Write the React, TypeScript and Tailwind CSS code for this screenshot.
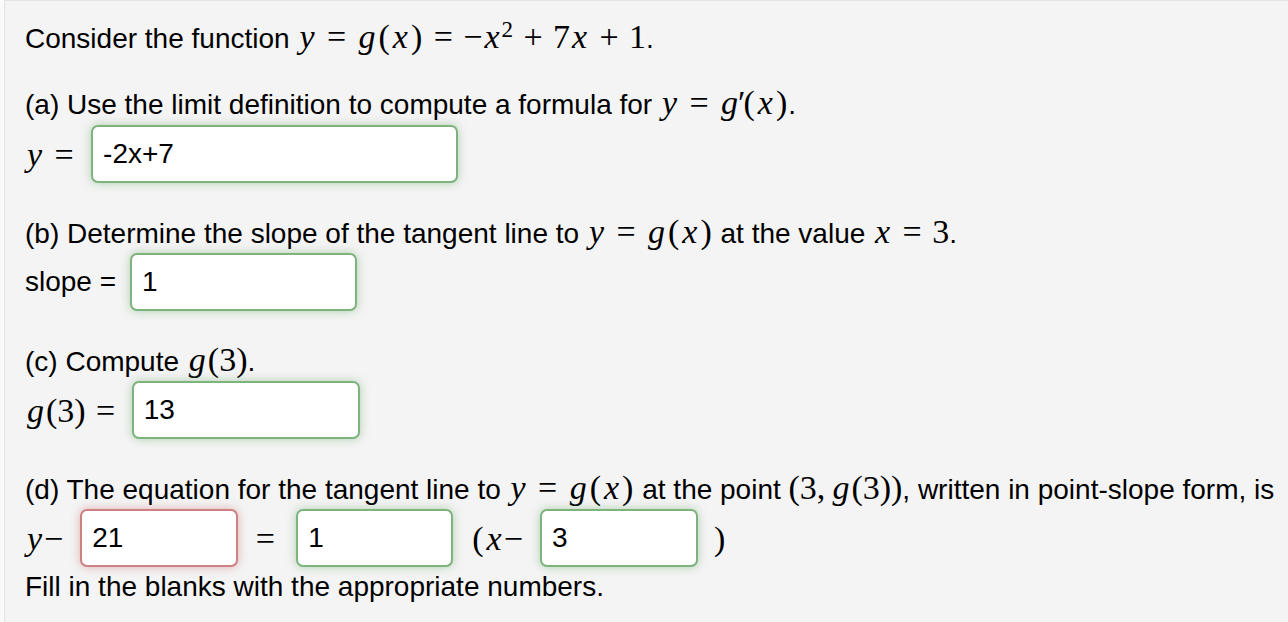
import type { ReactNode } from "react";

// ---------------------------------------------------------------------------
// Math helpers (serif, TeX-like)
// ---------------------------------------------------------------------------

function Mi({ children }: { children: ReactNode }) {
  return (
    <span className="px-[2px] font-['Liberation_Serif',serif] text-[34px] italic">{children}</span>
  );
}

function Mn({ children }: { children: ReactNode }) {
  return <span className="font-['Liberation_Serif',serif] text-[34px]">{children}</span>;
}

function P({ children }: { children: ReactNode }) {
  return <span className="px-[1px] font-['Liberation_Serif',serif] text-[34px]">{children}</span>;
}

function Rel({ children = "=" }: { children?: ReactNode }) {
  return (
    <span className="inline-block w-[40px] text-center font-['Liberation_Serif',serif] text-[34px]">
      {children}
    </span>
  );
}

function Bin({ children }: { children: ReactNode }) {
  return (
    <span className="inline-block w-[40px] text-center font-['Liberation_Serif',serif] text-[34px]">
      {children}
    </span>
  );
}

type Tone = "ok" | "bad";

function Blank({ value, width, tone = "ok" }: { value: string; width: string; tone?: Tone }) {
  const toneCls =
    tone === "ok"
      ? "border-[#7db37d] shadow-[0_0_10px_rgba(110,170,110,0.5)]"
      : "border-[#cf8080] shadow-[0_0_10px_rgba(200,110,110,0.5)]";
  return (
    <div
      className={`flex h-[58px] shrink-0 items-center rounded-[7px] border-2 bg-white pl-[10px] text-[28px] ${toneCls} ${width}`}
    >
      {value}
    </div>
  );
}

export default function App() {
  return (
    <div className="h-[622px] w-[1288px] bg-[#fafafa] pl-[4px] font-['Liberation_Sans',Arial,sans-serif] text-black">
      <div className="h-full border-l border-t border-[#e4e4e4] bg-[#f4f4f4] pl-[20px] pt-[18px] text-[28px]">
        {/* intro */}
        <div className="h-[36px] whitespace-nowrap leading-[36px]">
          Consider the function <Mi>y</Mi>
          <Rel />
          <Mi>g</Mi>
          <P>(</P>
          <Mi>x</Mi>
          <P>)</P>
          <Rel />
          <Mn>−</Mn>
          <Mi>x</Mi>
          <sup className="font-['Liberation_Serif',serif] text-[23px]">2</sup>
          <Bin>+</Bin>
          <Mn>7</Mn>
          <Mi>x</Mi>
          <Bin>+</Bin>
          <Mn>1</Mn>.
        </div>

        {/* (a) */}
        <div className="mt-[30px] h-[36px] whitespace-nowrap leading-[36px]">
          (a) Use the limit definition to compute a formula for <Mi>y</Mi>
          <Rel />
          <Mi>g</Mi>
          <span className="-ml-[2px] -mr-[3px] font-['Liberation_Serif',serif] text-[34px]">′</span>
          <P>(</P>
          <Mi>x</Mi>
          <P>)</P>.
        </div>
        <div className="mt-[4px] flex items-center">
          <span className="whitespace-nowrap">
            <Mi>y</Mi>
            <Rel />
          </span>
          <div className="ml-[7px]">
            <Blank value="-2x+7" width="w-[367px]" />
          </div>
        </div>

        {/* (b) */}
        <div className="mt-[31px] h-[36px] whitespace-nowrap leading-[36px]">
          (b) Determine the slope of the tangent line to <Mi>y</Mi>
          <Rel />
          <Mi>g</Mi>
          <P>(</P>
          <Mi>x</Mi>
          <P>)</P> at the value <Mi>x</Mi>
          <Rel />
          <Mn>3</Mn>.
        </div>
        <div className="mt-[3px] flex items-center">
          <span className="whitespace-nowrap">slope =</span>
          <div className="ml-[14px]">
            <Blank value="1" width="w-[227px]" />
          </div>
        </div>

        {/* (c) */}
        <div className="mt-[31px] h-[36px] whitespace-nowrap leading-[36px]">
          (c) Compute <Mi>g</Mi>
          <Mn>(3)</Mn>.
        </div>
        <div className="mt-[3px] flex items-center">
          <span className="whitespace-nowrap">
            <Mi>g</Mi>
            <Mn>(3)</Mn>
            <Rel />
          </span>
          <div className="ml-[6px]">
            <Blank value="13" width="w-[228px]" />
          </div>
        </div>

        {/* (d) */}
        <div className="mt-[31px] h-[36px] whitespace-nowrap leading-[36px]">
          (d) The equation for the tangent line to <Mi>y</Mi>
          <Rel />
          <Mi>g</Mi>
          <P>(</P>
          <Mi>x</Mi>
          <P>)</P> at the point <Mn>(3,</Mn>
          <span className="inline-block w-[5px]" />
          <Mi>g</Mi>
          <Mn>(3))</Mn>, written in point-slope form, is
        </div>
        <div className="mt-[3px] flex items-center">
          <span className="whitespace-nowrap">
            <Mi>y</Mi>
            <Mn>−</Mn>
          </span>
          <div className="ml-[17px]">
            <Blank value="21" width="w-[158px]" tone="bad" />
          </div>
          <span className="ml-[7px]">
            <Rel />
          </span>
          <div className="ml-[11px]">
            <Blank value="1" width="w-[157px]" />
          </div>
          <span className="ml-[18px] whitespace-nowrap">
            <P>(</P>
            <Mi>x</Mi>
            <Mn>−</Mn>
          </span>
          <div className="ml-[17px]">
            <Blank value="3" width="w-[158px]" />
          </div>
          <span className="ml-[16px]">
            <Mn>)</Mn>
          </span>
        </div>

        <div className="mt-[2px] h-[36px] whitespace-nowrap leading-[36px]">
          Fill in the blanks with the appropriate numbers.
        </div>
      </div>
    </div>
  );
}
